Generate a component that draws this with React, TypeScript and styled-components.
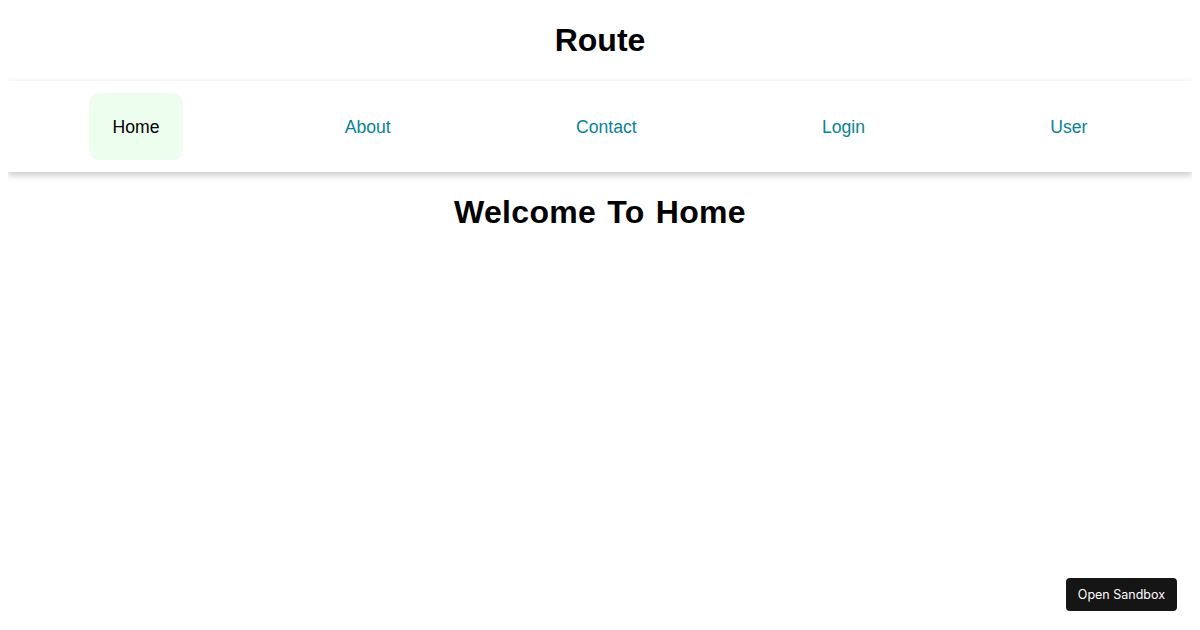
import styled, { createGlobalStyle } from 'styled-components';

const links = ['Home', 'About', 'Contact', 'Login', 'User'];

function App() {
  const active = 'Home';

  return (
    <>
      <GlobalStyle />
      <Title>Route</Title>

      <NavBar>
        <NavList>
          {links.map((link) => (
            <NavItem key={link} $active={link === active}>
              {link}
            </NavItem>
          ))}
        </NavList>
      </NavBar>

      <Heading>Welcome To {active}</Heading>

      <SandboxButton>Open Sandbox</SandboxButton>
    </>
  );
}

export default App;

const GlobalStyle = createGlobalStyle`
  body {
    margin: 0 8px;
    background: #ffffff;
    font-family: "Liberation Sans", Arial, sans-serif;
  }
`;

const Title = styled.h1`
  margin: 22px 0 23px;
  font-size: 32px;
  line-height: 36px;
  font-weight: 700;
  text-align: center;
  color: #000000;
`;

const NavBar = styled.nav`
  background: #ffffff;
  box-shadow: 0 3px 7px rgba(0, 0, 0, 0.22);
  padding: 12px;
`;

const NavList = styled.ul`
  display: flex;
  justify-content: space-around;
  align-items: center;
  list-style: none;
  margin: 0;
  padding: 0;
`;

const NavItem = styled.li<{ $active: boolean }>`
  padding: 23.5px 23.5px 22.5px;
  border-radius: 10px;
  font-size: 17.6px;
  line-height: 21px;
  cursor: pointer;
  color: ${(p) => (p.$active ? '#000000' : '#088395')};
  background: ${(p) => (p.$active ? '#edfdee' : 'transparent')};
`;

const Heading = styled.h1`
  margin: 22px 0;
  font-size: 32px;
  line-height: 36px;
  font-weight: 700;
  letter-spacing: 0.3px;
  word-spacing: 2px;
  text-align: center;
  color: #000000;
`;

const SandboxButton = styled.button`
  position: fixed;
  right: 23px;
  bottom: 19px;
  height: 33px;
  padding: 0 12px;
  border: none;
  border-radius: 4px;
  background: #151515;
  color: #ffffff;
  font-family: Inter, "Liberation Sans", sans-serif;
  font-size: 12.5px;
  cursor: pointer;
`;
